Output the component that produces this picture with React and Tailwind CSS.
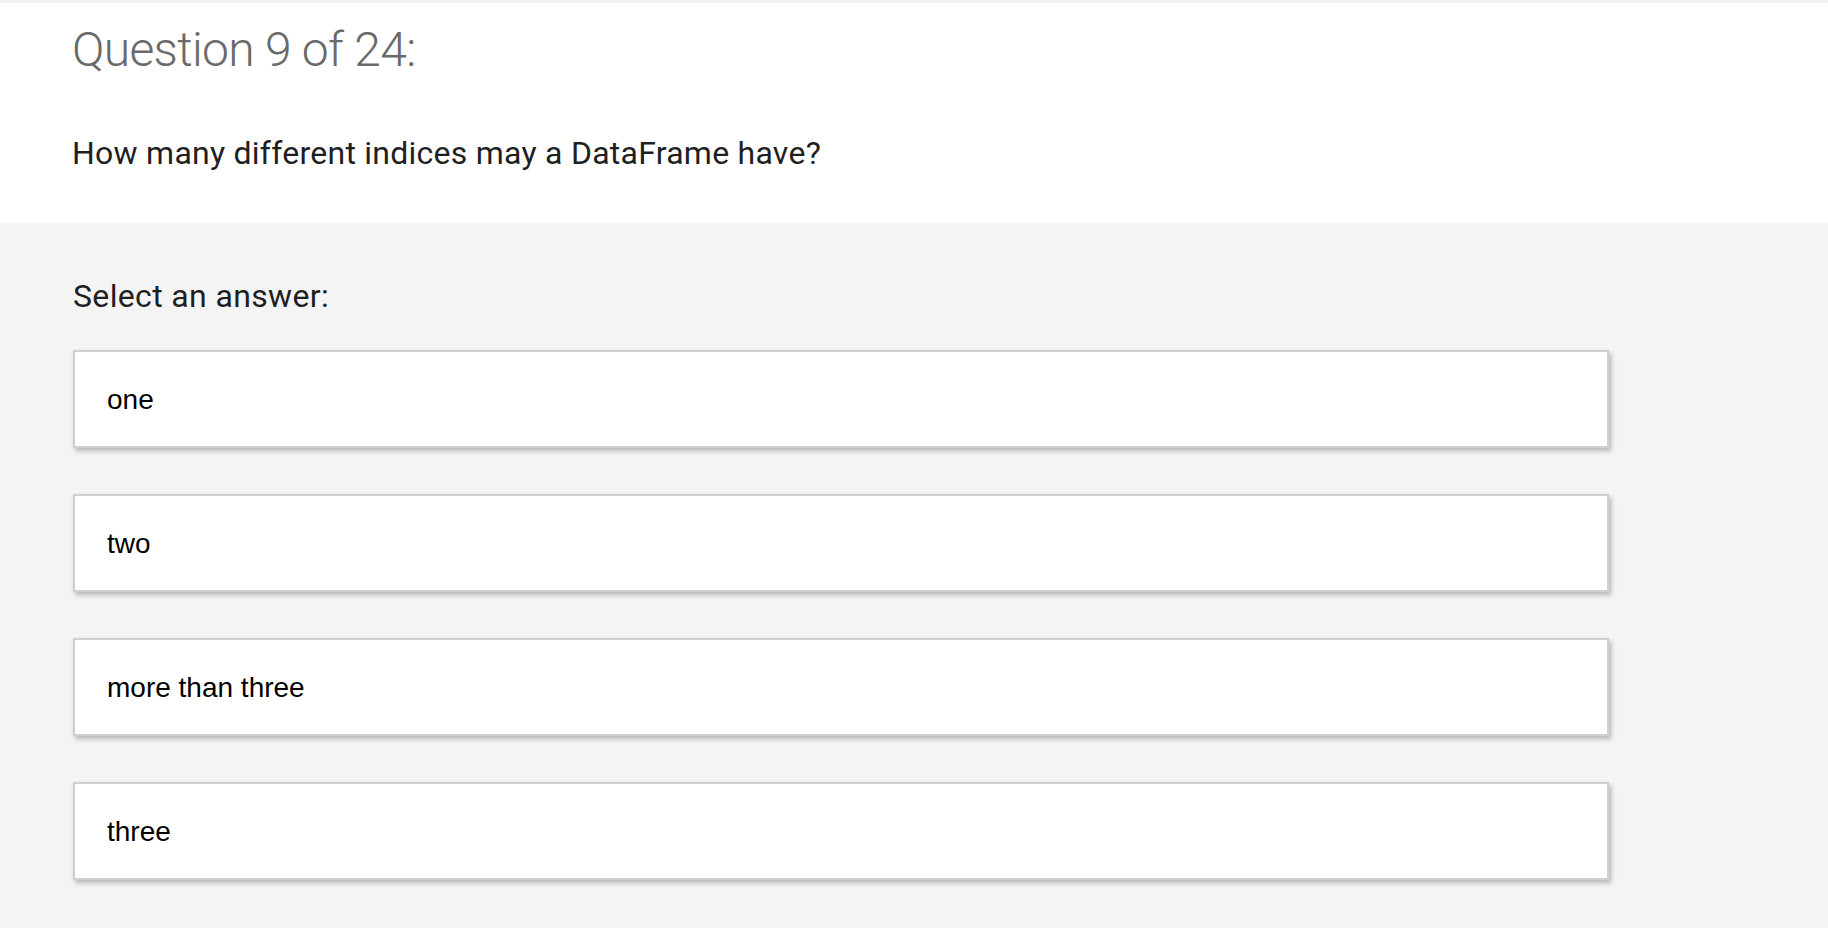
import React from "react";

const answers = ["one", "two", "more than three", "three"];

export default function App() {
  return (
    <div className="min-h-[928px] w-full bg-[#f4f4f4]" style={{ fontFamily: "Roboto, 'Noto Sans', sans-serif" }}>
      <div className="h-[3px] bg-[#f2f2f2]" />
      <header className="bg-white pl-[72px] pt-[19px] pb-[51px]">
        <h1 className="text-[48px] leading-[56px] font-light text-[#6a6a6a] tracking-[-0.7px]">Question 9 of 24:</h1>
        <p className="mt-[56px] text-[32px] leading-[38px] text-[#1f1f1f] tracking-[0.25px]">
          How many different indices may a DataFrame have?
        </p>
      </header>
      <main className="pl-[73px] pt-[54px] pb-[40px]">
        <h2 className="text-[32px] leading-[38px] text-[#1f1f1f] tracking-[0.35px]">Select an answer:</h2>
        <div className="mt-[35px] flex flex-col gap-[46px]">
          {answers.map((a) => (
            <div
              key={a}
              className="w-[1536px] h-[98px] bg-white border-2 border-[#d0d0d0] shadow-[2px_3px_5px_rgba(0,0,0,0.26)] pl-[32px] pt-[32px]"
            >
              <span
                className="block text-[28px] leading-[32px] text-black"
                style={{ fontFamily: "'Liberation Sans', Arial, sans-serif" }}
              >
                {a}
              </span>
            </div>
          ))}
        </div>
      </main>
    </div>
  );
}
